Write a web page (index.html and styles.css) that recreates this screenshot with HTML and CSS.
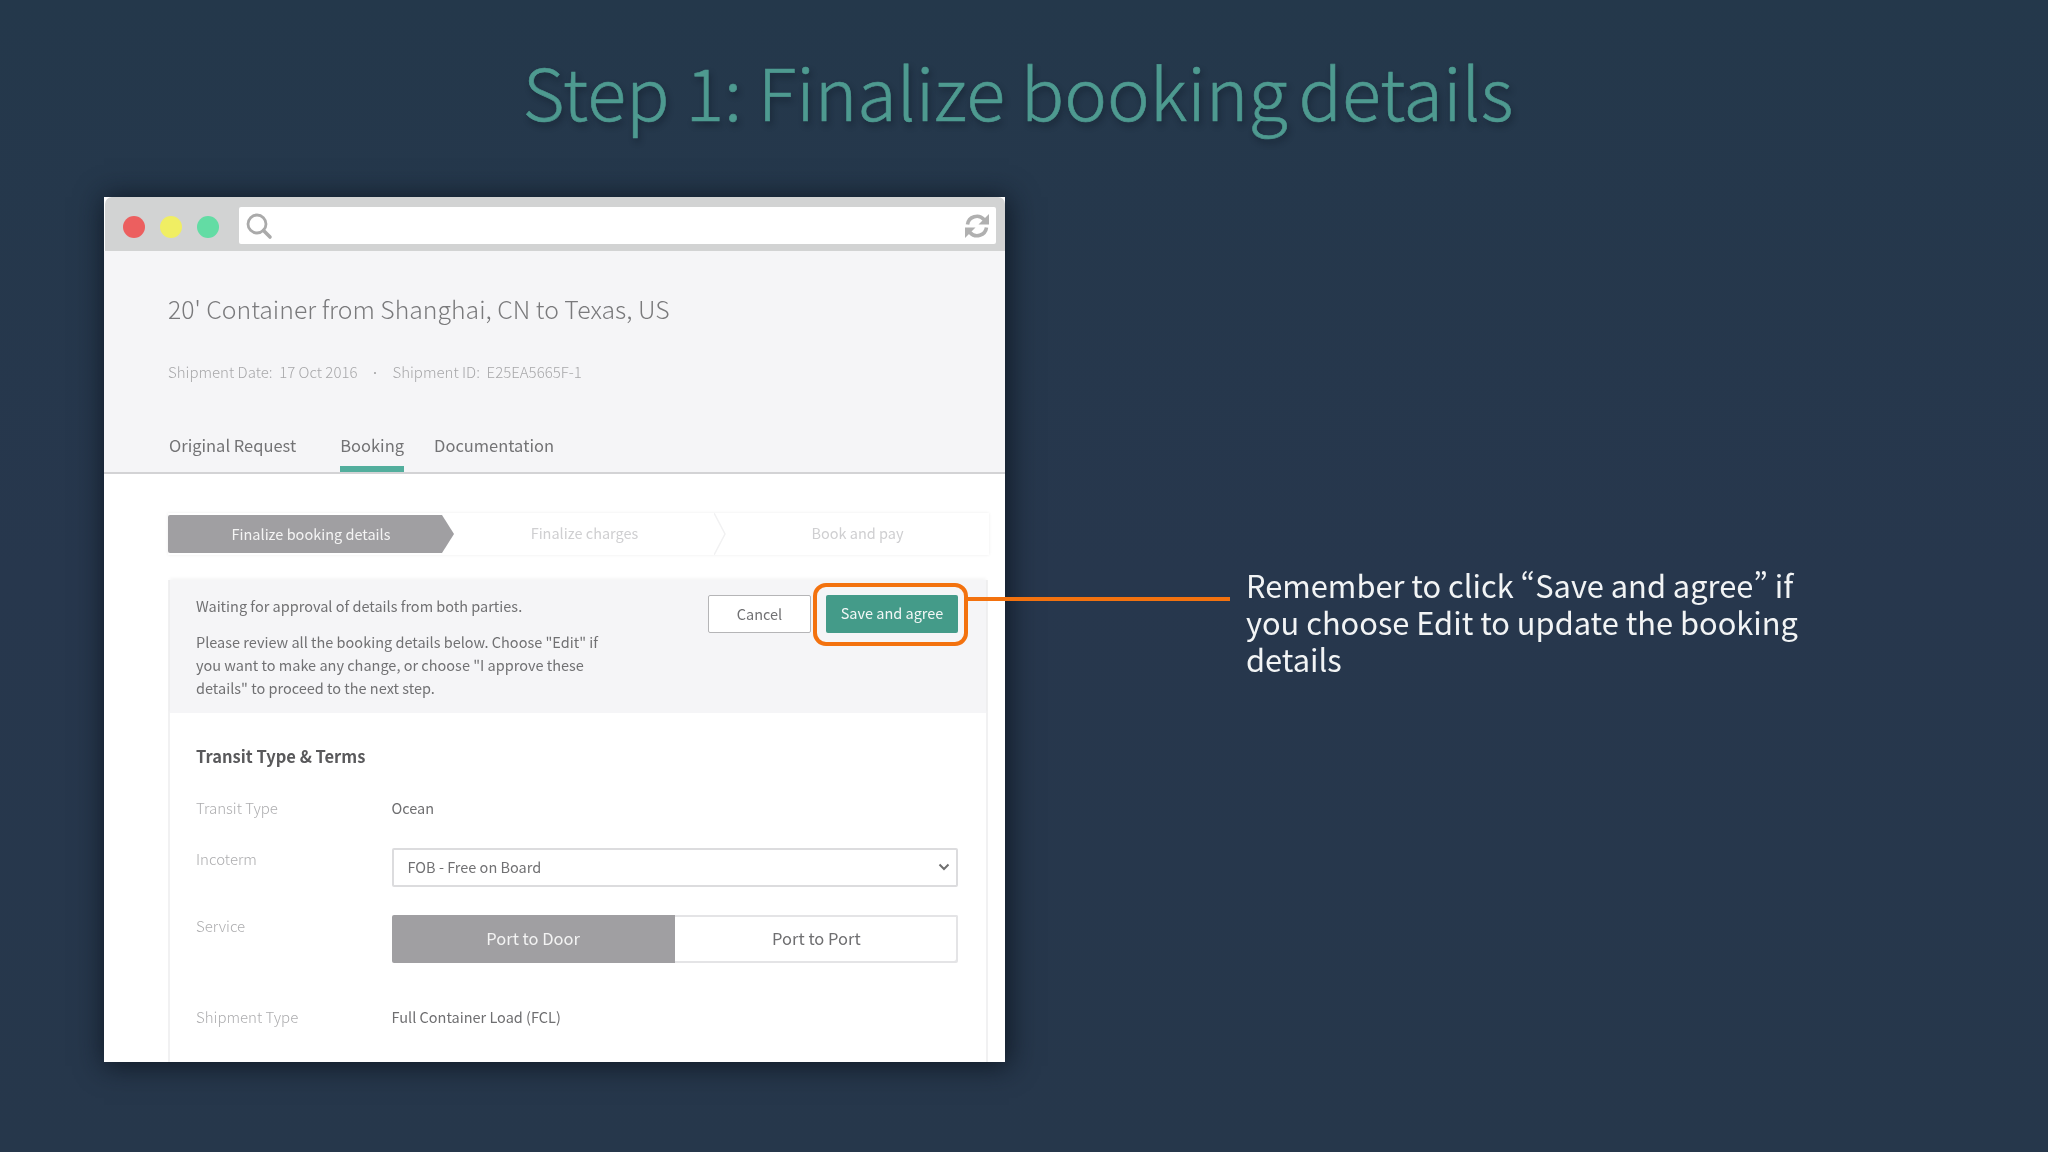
FILE: index.html
```html
<!DOCTYPE html>
<html lang="en">
<head>
<meta charset="utf-8">
<title>Step 1: Finalize booking details</title>
<link rel="stylesheet" href="styles.css">
</head>
<body>
<div class="slide">
  <h1 class="slide-title">Step 1: Finalize <span class="tight">booking </span>details</h1>
  <div class="stage">
    <div class="window">
      <div class="toolbar">
        <div class="dots"><span class="dot red"></span><span class="dot yellow"></span><span class="dot green"></span></div>
        <div class="address">
          <svg class="icon-search" width="28" height="28" viewBox="0 0 28 28"><circle cx="12" cy="12" r="9" fill="none" stroke="#aaa" stroke-width="2.8"/><path d="M18.5 18.5L25 25" stroke="#aaa" stroke-width="3.6" stroke-linecap="round"/></svg>
          <svg class="icon-refresh" width="26" height="26" viewBox="0 0 26 26"><path d="M3.500 11.5A9.500 9.500 0 0 1 20 6.500L22 8.500" fill="none" stroke="#b0b0b0" stroke-width="3.600"/><path d="M25 1V11.500H14.500Z" fill="#b0b0b0"/><path d="M22.500 14.500A9.500 9.500 0 0 1 6 19.500L4 17.500" fill="none" stroke="#b0b0b0" stroke-width="3.600"/><path d="M1 25V14.500H11.500Z" fill="#b0b0b0"/></svg>
        </div>
      </div>
      <div class="page-head">
        <h2 class="shipment-title">20' Container from Shanghai, CN to Texas, US</h2>
        <div class="meta">
          <span>Shipment Date:&nbsp; 17 Oct 2016</span><span class="meta-dot">•</span><span>Shipment ID:&nbsp; E25EA5665F-1</span>
        </div>
        <div class="tabs">
          <span class="tab tab-request">Original Request</span>
          <span class="tab tab-active">Booking</span>
          <span class="tab">Documentation</span>
        </div>
      </div>
      <div class="page-body">
        <div class="stepper">
          <div class="step step-active">Finalize booking details</div>
          <div class="step step-second">Finalize charges<svg class="step-arrow" width="12" height="42" viewBox="0 0 12 42"><path d="M0 0L11 21L0 42" fill="none" stroke="#f1f1f2" stroke-width="1.500"/></svg></div>
          <div class="step step-third">Book and pay</div>
        </div>
        <div class="panel">
          <div class="notice">
            <div class="notice-text">
              <p class="notice-first">Waiting for approval of details from both parties.</p>
              <p>Please review all the booking details below. Choose "Edit" if you want to make any change, or choose "I approve these details" to proceed to the next step.</p>
            </div>
            <div class="actions">
              <span class="btn btn-cancel">Cancel</span>
              <span class="btn btn-save">Save and agree<span class="highlight"><span class="connector"></span></span></span>
            </div>
          </div>
          <div class="form">
            <h3 class="section-title">Transit Type &amp; Terms</h3>
            <div class="row row-transit"><span class="label">Transit Type</span><span class="value">Ocean</span></div>
            <div class="row row-incoterm"><span class="label">Incoterm</span>
              <div class="select">FOB - Free on Board<svg width="12" height="8" viewBox="0 0 12 8"><path d="M1.500 1.500L6 6L10.500 1.500" fill="none" stroke="#6f6f6f" stroke-width="2"/></svg></div>
            </div>
            <div class="row row-service"><span class="label">Service</span>
              <div class="toggle"><span class="toggle-on">Port to Door</span><span class="toggle-off">Port to Port</span></div>
            </div>
            <div class="row row-shipment"><span class="label">Shipment Type</span><span class="value">Full Container Load (FCL)</span></div>
          </div>
        </div>
      </div>
    </div>
    <p class="callout">Remember to click “Save and agree” if you choose Edit to update the booking details</p>
  </div>
</div>
</body>
</html>
```
FILE: styles.css
```css
* { box-sizing: border-box; }
html, body { margin: 0; padding: 0; }
body {
  width: 2048px;
  height: 1152px;
  overflow: hidden;
  font-family: "Noto Sans CJK SC", "Noto Sans", sans-serif;
}
p, h1, h2, h3 { margin: 0; font-weight: 400; }
.slide {
  width: 2048px;
  height: 1152px;
  background: linear-gradient(180deg, #24384b 0%, #27374d 50%, #26374b 100%);
  padding-top: 42px;
  filter: blur(.5px);
}
.slide-title {
  height: 155px;
  padding-right: 12px;
  text-align: center;
  font-size: 72px;
  line-height: 96px;
  font-weight: 300;
  color: #4e9a90;
  -webkit-text-stroke: .6px #4e9a90;
  text-shadow: 2px 4px 6px rgba(10, 20, 30, .45);
  white-space: nowrap;
}
.tight { word-spacing: -5px; }
.stage { display: flex; align-items: flex-start; padding-left: 104px; }
.window {
  width: 901px;
  height: 865px;
  flex: none;
  background: #fff;
  box-shadow: 2px 2px 26px 2px rgba(10, 18, 28, .8);
  display: flex;
  flex-direction: column;
}
.toolbar {
  height: 54px;
  margin-left: 1px;
  padding: 10px 9px 7px 18px;
  background: #d2d3d3;
  border-radius: 7px 7px 0 0;
  display: flex;
}
.dots { width: 116px; display: flex; gap: 15px; align-items: center; flex: none; padding-top: 2px; }
.dot { width: 22px; height: 22px; border-radius: 50%; }
.red { background: #ec5f5f; }
.yellow { background: #f0ee63; }
.green { background: #63dca4; }
.address {
  flex: 1;
  background: #fff;
  border-radius: 2px;
  display: flex;
  align-items: center;
  justify-content: space-between;
  padding: 0 6px;
}
.page-head {
  height: 223px;
  padding: 38px 0 0 64px;
  background: #f5f5f7;
  border-bottom: 2px solid #d3d3d5;
  display: flex;
  flex-direction: column;
}
.shipment-title {
  font-size: 24.800px;
  line-height: 38px;
  font-weight: 300;
  color: #7a7a7c;
  white-space: nowrap;
}
.meta {
  margin-top: 34px;
  display: flex;
  font-size: 15px;
  line-height: 22px;
  font-weight: 300;
  color: #a8a8aa;
  white-space: nowrap;
}
.meta-dot { width: 35px; text-align: center; font-size: 11px; }
.tabs {
  margin-top: auto;
  margin-left: 1px;
  display: flex;
  font-size: 16.500px;
  line-height: 24px;
  color: #737375;
  white-space: nowrap;
}
.tab { height: 39px; }
.tab-request { margin-right: 44px; }
.tab-active { margin-right: 30px; border-bottom: 6px solid #52ae9d; }
.page-body { flex: 1; min-height: 0; padding: 39px 16px 0 64px; background: #fff; }
.stepper {
  height: 42px;
  display: flex;
  font-size: 14.500px;
  line-height: 40px;
  color: #cfcfd1;
  box-shadow: 0 0 3px rgba(0, 0, 0, .08);
  white-space: nowrap;
}
.step { height: 42px; text-align: center; }
.step-active {
  width: 286px;
  padding-top: 2px;
  height: 38px;
  margin-top: 2px;
  line-height: 34px;
  background: #a09fa2;
  color: #f4f4f4;
  clip-path: polygon(0 0, 274px 0, 286px 50%, 274px 100%, 0 100%);
  border-radius: 2px;
}
.step-second { width: 272px; padding-right: 11px; position: relative; }
.step-arrow { position: absolute; right: 0; top: 0; }
.step-third { flex: 1; }
.panel {
  margin-top: 25px;
  height: 482px;
  border-left: 2px solid #f1f1f2;
  border-right: 2px solid #f1f1f2;
  margin-right: 1px;
}
.notice {
  height: 133px;
  background: #f5f5f7;
  padding: 14px 28px 0 26px;
  display: flex;
  justify-content: space-between;
  font-size: 14.500px;
  line-height: 23px;
  color: #717173;
  box-shadow: 0 -2px 3px rgba(0, 0, 0, .04);
}
.notice-text { width: 420px; }
.notice-first { margin-bottom: 13px; }
.actions { display: flex; gap: 15px; margin-top: 1px; }
.btn {
  height: 38px;
  border-radius: 2px;
  text-align: center;
  line-height: 36px;
  white-space: nowrap;
}
.btn-cancel { width: 103px; background: #fff; border: 1px solid #b5b5b7; color: #717173; }
.btn-save { width: 132px; background: #449b89; color: #f2f7f6; position: relative; }
.highlight {
  position: absolute;
  left: -13px;
  top: -12px;
  width: 155px;
  height: 63px;
  border: 4px solid #f3720f;
  border-radius: 13px;
}
.connector {
  position: absolute;
  left: 100%;
  top: 10px;
  width: 266px;
  height: 4px;
  background: #f3720f;
}
.form { padding: 31px 28px 0 26px; font-size: 14.500px; line-height: 22px; }
.section-title { font-size: 16.500px; line-height: 24px; font-weight: 700; color: #59595b; }
.row { display: flex; white-space: nowrap; }
.label { width: 195.500px; flex: none; color: #adadaf; font-weight: 300; font-size: 15px; }
.value { color: #6f6f71; }
.row-transit { margin-top: 29px; }
.row-incoterm { margin-top: 29px; }
.select {
  flex: 1;
  height: 39px;
  display: flex;
  align-items: center;
  justify-content: space-between;
  padding: 0 6px 2px 14px;
  background: #fff;
  border: 2px solid #dcdcde;
  border-radius: 2px;
  color: #717173;
}
.row-service { margin-top: 28px; }
.toggle { flex: 1; height: 48px; display: flex; font-size: 16.500px; line-height: 47px; text-align: center; }
.toggle-on { flex: 1; background: #a09fa2; color: #f3f3f3; border-radius: 2px 0 0 2px; }
.toggle-off { flex: 1; background: #fff; color: #6f6f71; box-shadow: inset -2px -2px 0 #e4e4e6, inset 0 2px 0 #e4e4e6; border-radius: 0 2px 2px 0; }
.row-shipment { margin-top: 43px; }
.callout {
  width: 570px;
  margin: 369px 0 0 241px;
  font-size: 30.800px;
  line-height: 37px;
  font-weight: 400;
  color: #f2f4f5;
  font-feature-settings: "pwid";
}
```
